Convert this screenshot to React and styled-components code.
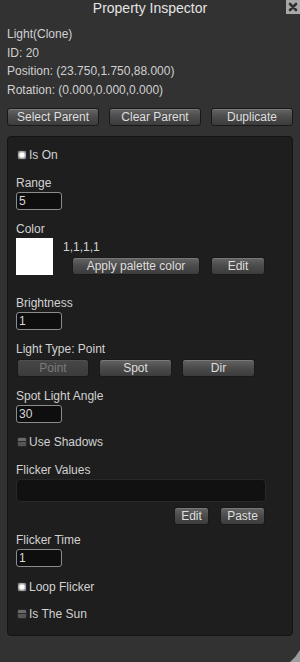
import React from 'react'
import styled, { createGlobalStyle } from 'styled-components'

const Global = createGlobalStyle`
  html, body { margin: 0; padding: 0; background: #323232; }
  body {
    font-family: "Liberation Sans", Arial, sans-serif;
    font-size: 12px;
    color: #d4d4d4;
  }
`

const Window = styled.div`
  position: relative;
  width: 300px;
  height: 662px;
  box-sizing: border-box;
  padding: 0 7px;
  display: flex;
  flex-direction: column;
  background: #323232;
  overflow: hidden;
`

const TitleBar = styled.div`
  margin: 0 -7px;
  height: 17px;
  display: grid;
  grid-template-columns: 14px 1fr 14px;
  align-items: start;
`

const Title = styled.div`
  grid-column: 2;
  text-align: center;
  font-size: 14px;
  line-height: 17px;
  color: #e4e4e4;
`

const Close = styled.div`
  grid-column: 3;
  width: 14px;
  height: 14px;
  background: #a8a8a8;
  display: flex;
  align-items: center;
  justify-content: center;
`

const Info = styled.div`
  padding-top: 8px;
  line-height: 18.7px;
  color: #d0d0d0;
`

const TopButtons = styled.div`
  margin-top: 8.5px;
  display: grid;
  grid-template-columns: 92px 92px 82px;
  gap: 10px;
`

const Button = styled.div`
  box-sizing: border-box;
  height: 18px;
  width: ${p => (p.$w ? `${p.$w}px` : 'auto')};
  border: 1px solid #191919;
  border-radius: 3px;
  background: ${p =>
    p.$disabled
      ? 'linear-gradient(#474747, #3b3b3b)'
      : 'linear-gradient(#646464, #4b4b4b 50%, #3c3c3c)'};
  box-shadow: inset 0 1px 0 rgba(255, 255, 255, ${p => (p.$disabled ? 0.05 : 0.14)});
  color: ${p => (p.$disabled ? '#7a7a7a' : '#dedede')};
  font-size: 12px;
  line-height: 16px;
  text-align: center;
  white-space: nowrap;
`

const Panel = styled.div`
  margin-top: 10px;
  box-sizing: border-box;
  border: 1px solid #141414;
  border-radius: 4px;
  background: #1e1e1e;
  padding: 9px 8px 12px;
  display: flex;
  flex-direction: column;
`

const Item = styled.div`
  margin-top: ${p => p.$mt || 0}px;
  display: flex;
  flex-direction: column;
  align-items: flex-start;
`

const Label = styled.div`
  line-height: 18px;
  height: 18px;
  color: #d2d2d2;
`

const CheckRow = styled.div`
  height: 18px;
  display: flex;
  align-items: center;
  gap: 2px;
  padding-left: 1px;
  color: #d2d2d2;
`

const Box = styled.span`
  box-sizing: border-box;
  width: 10px;
  height: 10px;
  border-radius: 2px;
  border: 1px solid #2a2a2a;
  background: ${p =>
    p.$on
      ? 'radial-gradient(circle, #ffffff 0 35%, #d8d8d8 45%, #8a8a8a 75%)'
      : 'linear-gradient(#6a6a6a 0 40%, #2c2c2c 40% 55%, #555 55% 100%)'};
`

const Input = styled.div`
  box-sizing: border-box;
  width: 46px;
  height: 18px;
  border: 1px solid #8c8c8c;
  border-radius: 3px;
  background: #0e0e0e;
  padding-left: 2px;
  line-height: 16px;
  color: #d8d8d8;
`

const ColorRow = styled.div`
  height: 46px;
  display: flex;
`

const Swatch = styled.div`
  width: 37px;
  height: 37px;
  background: #ffffff;
`

const ColorSide = styled.div`
  margin-left: 10px;
  display: flex;
  flex-direction: column;
`

const Value = styled.div`
  line-height: 18px;
  color: #d2d2d2;
`

const ButtonGroup = styled.div`
  display: flex;
  gap: ${p => p.$gap || 11}px;
  margin-left: ${p => p.$ml || 0}px;
  margin-top: ${p => p.$mt || 0}px;
`

const TypeButtons = styled.div`
  margin-top: 1px;
  margin-left: 1px;
  display: grid;
  grid-template-columns: 72px 73px 73px;
  gap: 10px;
`

const TextArea = styled.div`
  box-sizing: border-box;
  width: 250px;
  height: 23px;
  border: 1px solid #282828;
  border-radius: 4px;
  background: #111111;
`

const FlickerButtons = styled.div`
  width: 250px;
  margin-top: 5px;
  padding-right: 1px;
  box-sizing: border-box;
  display: flex;
  justify-content: flex-end;
  gap: 11px;
`

const Grip = styled.svg`
  position: absolute;
  right: 0;
  bottom: 0;
`

const Check = ({ on, children, mt }) => (
  <Item $mt={mt}>
    <CheckRow>
      <Box $on={on} />
      {children}
    </CheckRow>
  </Item>
)

const Field = ({ label, value, mt }) => (
  <Item $mt={mt}>
    <Label>{label}</Label>
    <Input>{value}</Input>
  </Item>
)

export default function App() {
  return (
    <>
      <Global />
      <Window>
        <TitleBar>
          <Title>Property Inspector</Title>
          <Close>
            <svg width="10" height="10" viewBox="0 0 10 10">
              <path d="M2 2 L8 8 M8 2 L2 8" stroke="#303030" strokeWidth="2.6" strokeLinecap="round" />
            </svg>
          </Close>
        </TitleBar>

        <Info>
          <div>Light(Clone)</div>
          <div>ID: 20</div>
          <div>Position: (23.750,1.750,88.000)</div>
          <div>Rotation: (0.000,0.000,0.000)</div>
        </Info>

        <TopButtons>
          <Button>Select Parent</Button>
          <Button>Clear Parent</Button>
          <Button>Duplicate</Button>
        </TopButtons>

        <Panel>
          <Check on>Is On</Check>
          <Field label="Range" value="5" mt={10} />

          <Item $mt={10}>
            <Label>Color</Label>
            <ColorRow>
              <Swatch />
              <ColorSide>
                <Value>1,1,1,1</Value>
                <ButtonGroup $ml={9} $mt={1}>
                  <Button $w={128}>Apply palette color</Button>
                  <Button $w={54}>Edit</Button>
                </ButtonGroup>
              </ColorSide>
            </ColorRow>
          </Item>

          <Field label="Brightness" value="1" mt={10} />

          <Item $mt={10}>
            <Label>Light Type: Point</Label>
            <TypeButtons>
              <Button $disabled>Point</Button>
              <Button>Spot</Button>
              <Button>Dir</Button>
            </TypeButtons>
          </Item>

          <Field label="Spot Light Angle" value="30" mt={10} />
          <Check mt={10}>Use Shadows</Check>

          <Item $mt={10}>
            <Label>Flicker Values</Label>
            <TextArea />
            <FlickerButtons>
              <Button $w={35}>Edit</Button>
              <Button $w={45}>Paste</Button>
            </FlickerButtons>
          </Item>

          <Field label="Flicker Time" value="1" mt={6} />
          <Check on mt={11}>Loop Flicker</Check>
          <Check mt={9}>Is The Sun</Check>
        </Panel>

        <Grip width="10" height="12" viewBox="0 0 10 12">
          <path d="M10 0 L10 12 L0 12 Q6 7 10 0 Z" fill="#9c9c9c" />
        </Grip>
      </Window>
    </>
  )
}
